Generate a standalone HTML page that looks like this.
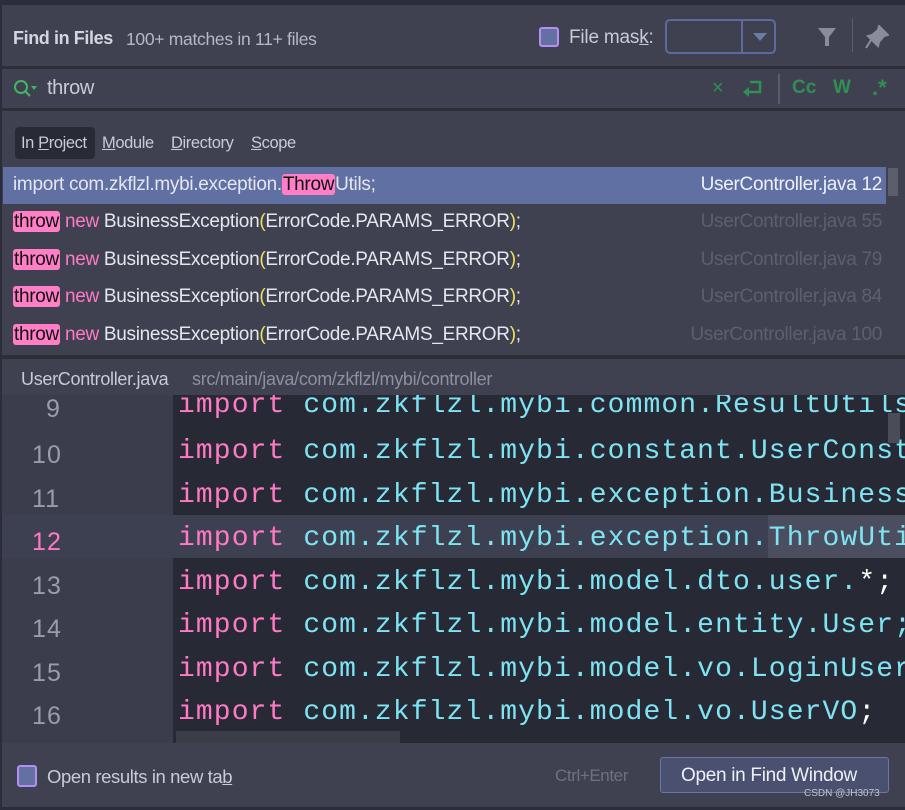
<!DOCTYPE html>
<html><head><meta charset="utf-8"><style>
*{margin:0;padding:0;box-sizing:border-box}
body{width:905px;height:810px;overflow:hidden;background:#2b2d3a;font-family:"Liberation Sans",sans-serif;position:relative}
.a{position:absolute}
.ui{font-size:17px;letter-spacing:-0.4px;white-space:nowrap}
.row{position:absolute;left:3px;width:883px;height:37px}
.row .l{position:absolute;left:10px;top:7px;color:#e4e6ee;font-size:19px;letter-spacing:-0.3px}
.row .r{position:absolute;right:4px;top:7px;color:#5c5f70;font-size:19px;letter-spacing:-0.3px}
.hl{background:#ff7ec6;color:#111;border-radius:3px;padding:0 1px}
.kw{color:#ff79c6}
.par{color:#f1e05a}
.code{font-family:"Liberation Mono",monospace;font-size:28px;letter-spacing:1.1px;white-space:nowrap}
.ln{position:absolute;left:30px;color:#9a9cae;font-family:"Liberation Sans",sans-serif;font-size:25px}
.cl{position:absolute;left:176px;color:#7ee3f2}
u{text-decoration:underline}
</style></head><body>
<div class="a" style="left:2px;top:5px;width:903px;height:802px;background:#3f4150"></div>
<div class="a ui" style="left:13px;top:28px;color:#d3d5e0;font-weight:bold;font-size:18px">Find in Files</div>
<div class="a ui" style="left:126px;top:29px;color:#b5b8c6;font-size:17.5px;letter-spacing:-0.3px">100+ matches in 11+ files</div>
<div class="a" style="left:539px;top:27px;width:20px;height:20px;border:2px solid #b48ef0;background:#6470a3;border-radius:3px"></div>
<div class="a ui" style="left:569px;top:27px;color:#c8cad6;font-size:19px;letter-spacing:-0.2px">File mas<u>k</u>:</div>
<div class="a" style="left:665px;top:19px;width:111px;height:35px;border:2px solid #5d6aa0;border-radius:5px"></div>
<div class="a" style="left:741px;top:20px;width:2px;height:33px;background:#5d6aa0"></div>
<div class="a" style="left:753px;top:33px;border-left:7px solid transparent;border-right:7px solid transparent;border-top:8px solid #6c7aa8"></div>
<svg class="a" style="left:816px;top:26px" width="22" height="22"><path d="M2 2H20L13 11V20H9V11Z" fill="#8a8c9a"/></svg>
<div class="a" style="left:852px;top:18px;width:1px;height:34px;background:#5a5c6a"></div>
<svg class="a" style="left:865px;top:25px" width="24" height="24"><path d="M14 1L23 10L19 11L14 17L13 21L3 11L7 10L13 5Z M6 15L1 23" fill="#8a8c9a" stroke="#8a8c9a" stroke-width="2"/></svg>
<div class="a" style="left:2px;top:66px;width:903px;height:3px;background:#2c2e38"></div>
<svg class="a" style="left:13px;top:79px" width="26" height="20"><circle cx="8" cy="8" r="6" fill="none" stroke="#3fb860" stroke-width="2"/><path d="M12 12L17 17" stroke="#3fb860" stroke-width="2"/><path d="M18 7H24L21 11Z" fill="#3fb860"/></svg>
<div class="a ui" style="left:47px;top:77px;color:#c8cad6;font-size:20px">throw</div>
<div class="a" style="left:712px;top:77px;color:#2f8f54;font-size:20px">×</div>
<svg class="a" style="left:740px;top:78px" width="24" height="22"><path d="M10 4H20V14H6" fill="none" stroke="#2f8f54" stroke-width="2.5"/><path d="M9 9L3 14L9 19Z" fill="#2f8f54"/></svg>
<div class="a" style="left:778px;top:74px;width:2px;height:30px;background:#5a5c6a"></div>
<div class="a" style="left:792px;top:77px;color:#2f8f54;font-weight:bold;font-size:19px">Cc</div>
<div class="a" style="left:833px;top:77px;color:#2f8f54;font-weight:bold;font-size:19px">W</div>
<div class="a" style="left:872px;top:75px;color:#2f8f54;font-weight:bold;font-size:22px">.*</div>
<div class="a" style="left:2px;top:108px;width:903px;height:3px;background:#2c2e38"></div>
<div class="a" style="left:15px;top:127px;width:80px;height:32px;background:#282a34;border-radius:4px"></div>
<div class="a ui" style="left:21px;top:134px;color:#c8cad6;font-size:16.5px">In <u>P</u>roject</div>
<div class="a ui" style="left:102px;top:134px;color:#c8cad6;font-size:16.5px"><u>M</u>odule</div>
<div class="a ui" style="left:171px;top:134px;color:#c8cad6;font-size:16.5px"><u>D</u>irectory</div>
<div class="a ui" style="left:251px;top:134px;color:#c8cad6;font-size:16.5px"><u>S</u>cope</div>
<div class="row ui" style="top:167px;background:#6070a2"><span class="l">import com.zkflzl.mybi.exception.<span class="hl">Throw</span>Utils;</span><span class="r" style="color:#eef0f8">UserController.java 12</span></div>
<div class="row ui" style="top:204px"><span class="l"><span class="hl">throw</span> <span class="kw">new</span> BusinessException<span class="par">(</span>ErrorCode.PARAMS_ERROR<span class="par">)</span>;</span><span class="r">UserController.java 55</span></div>
<div class="row ui" style="top:242px"><span class="l"><span class="hl">throw</span> <span class="kw">new</span> BusinessException<span class="par">(</span>ErrorCode.PARAMS_ERROR<span class="par">)</span>;</span><span class="r">UserController.java 79</span></div>
<div class="row ui" style="top:279px"><span class="l"><span class="hl">throw</span> <span class="kw">new</span> BusinessException<span class="par">(</span>ErrorCode.PARAMS_ERROR<span class="par">)</span>;</span><span class="r">UserController.java 84</span></div>
<div class="row ui" style="top:317px"><span class="l"><span class="hl">throw</span> <span class="kw">new</span> BusinessException<span class="par">(</span>ErrorCode.PARAMS_ERROR<span class="par">)</span>;</span><span class="r">UserController.java 100</span></div>
<div class="a" style="left:888px;top:168px;width:10px;height:28px;background:#5c5e6c"></div>
<div class="a" style="left:2px;top:355px;width:903px;height:4px;background:#2c2e38"></div>
<div class="a ui" style="left:21px;top:369px;color:#c8cad6;font-size:18px;letter-spacing:-0.3px">UserController.java</div>
<div class="a ui" style="left:192px;top:369px;color:#8d90a0;font-size:18px;letter-spacing:-0.3px">src/main/java/com/zkflzl/mybi/controller</div>
<div class="a" style="left:2px;top:395px;width:903px;height:348px;background:#272935;overflow:hidden">
 <div class="a" style="left:0;top:0;width:171px;height:348px;background:#3b3d4c"></div>
 <div class="a" style="left:0;top:120px;width:903px;height:43px;background:#3d4050"></div>
 <div class="a" style="left:766px;top:120px;width:137px;height:43px;background:#4a4e5f"></div>
 <div class="a" style="left:174px;top:336px;width:224px;height:12px;background:#3a3c48"></div>
 <div class="a" style="left:886px;top:18px;width:12px;height:30px;background:#4a4c58"></div>
</div>
<div class="a" style="left:2px;top:395px;width:903px;height:348px;overflow:hidden">
 <div class="code" style="position:absolute;left:0;top:6px;width:903px;height:348px">
  <div class="ln" style="top:-6px;left:44px">9</div><div class="cl" style="top:-11px"><span class="kw">import</span> com.zkflzl.mybi.common.ResultUtils;</div>
  <div class="ln" style="top:40px">10</div><div class="cl" style="top:35px"><span class="kw">import</span> com.zkflzl.mybi.constant.UserConstant;</div>
  <div class="ln" style="top:84px">11</div><div class="cl" style="top:79px"><span class="kw">import</span> com.zkflzl.mybi.exception.BusinessException;</div>
  <div class="ln" style="top:127px;color:#ff79c6">12</div><div class="cl" style="top:122px"><span class="kw">import</span> com.zkflzl.mybi.exception.ThrowUtils;</div>
  <div class="ln" style="top:171px">13</div><div class="cl" style="top:166px"><span class="kw">import</span> com.zkflzl.mybi.model.dto.user.<span style="color:#fff">*;</span></div>
  <div class="ln" style="top:214px">14</div><div class="cl" style="top:209px"><span class="kw">import</span> com.zkflzl.mybi.model.entity.User;</div>
  <div class="ln" style="top:258px">15</div><div class="cl" style="top:253px"><span class="kw">import</span> com.zkflzl.mybi.model.vo.LoginUserVO;</div>
  <div class="ln" style="top:301px">16</div><div class="cl" style="top:296px"><span class="kw">import</span> com.zkflzl.mybi.model.vo.UserVO<span style="color:#fff">;</span></div>
 </div>
</div>
<div class="a" style="left:17px;top:765px;width:20px;height:22px;border:2px solid #b48ef0;background:#6470a3;border-radius:3px"></div>
<div class="a ui" style="left:47px;top:766px;color:#c8cad6;font-size:18.5px">Open results in new ta<u>b</u></div>
<div class="a ui" style="left:555px;top:766px;color:#6e7182;font-size:17px">Ctrl+Enter</div>
<div class="a" style="left:660px;top:757px;width:229px;height:36px;border:1px solid #6a76a8;background:#4a5070;border-radius:3px"></div>
<div class="a ui" style="left:681px;top:765px;color:#eef0f8;font-size:19px;letter-spacing:-0.3px">Open in Find Window</div>
<div class="a" style="left:804px;top:788px;color:#c0c2cc;font-size:10px">CSDN @JH3073</div>
</body></html>
